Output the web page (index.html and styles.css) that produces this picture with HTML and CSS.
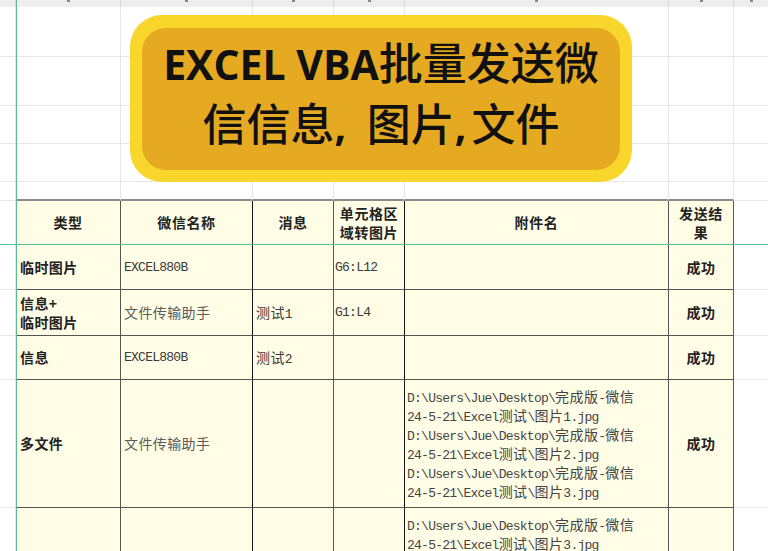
FILE: index.html
```html
<!DOCTYPE html>
<html lang="zh-CN">
<head>
<meta charset="utf-8">
<title>EXCEL VBA批量发送微信信息</title>
<link rel="stylesheet" href="styles.css">
</head>
<body>
<div class="sheet">
  <div class="grid">
    <!-- column header strip -->
    <div class="ch"></div>
    <div class="ch"><span class="tick"></span></div>
    <div class="ch"><span class="tick"></span></div>
    <div class="ch"><span class="tick"></span></div>
    <div class="ch"><span class="tick"></span></div>
    <div class="ch"><span class="tick"></span></div>
    <div class="ch"><span class="tick"></span></div>
    <div class="ch last"><span class="tick"></span></div>

    <!-- empty rows above the table -->
    <div class="g"></div><div class="g"></div><div class="g"></div><div class="g"></div><div class="g"></div><div class="g"></div><div class="g"></div><div class="g last"></div>
    <div class="g"></div><div class="g"></div><div class="g"></div><div class="g"></div><div class="g"></div><div class="g"></div><div class="g"></div><div class="g last"></div>
    <div class="g"></div><div class="g"></div><div class="g"></div><div class="g"></div><div class="g"></div><div class="g"></div><div class="g"></div><div class="g last"></div>
    <div class="g"></div><div class="g"></div><div class="g"></div><div class="g"></div><div class="g"></div><div class="g"></div><div class="g"></div><div class="g last"></div>
    <div class="g"></div><div class="g tb"></div><div class="g tb"></div><div class="g tb"></div><div class="g tb"></div><div class="g tb"></div><div class="g tb"></div><div class="g last"></div>

    <!-- header row -->
    <div class="g"></div>
    <div class="t h">类型</div>
    <div class="t h dark">微信名称</div>
    <div class="t h">消息</div>
    <div class="t h dark"><div>单元格区<br>域转图片</div></div>
    <div class="t h">附件名</div>
    <div class="t h"><div>发送结<br>果</div></div>
    <div class="g last"></div>

    <!-- row 1 -->
    <div class="g"></div>
    <div class="t b">临时图片</div>
    <div class="t dark"><span class="m">EXCEL880B</span></div>
    <div class="t"></div>
    <div class="t dark tight"><span class="m">G6:L12</span></div>
    <div class="t"></div>
    <div class="t b c">成功</div>
    <div class="g last"></div>

    <!-- row 2 -->
    <div class="g"></div>
    <div class="t b"><div>信息+<br>临时图片</div></div>
    <div class="t dark grey">文件传输助手</div>
    <div class="t"><div>测试<span class="m">1</span></div></div>
    <div class="t dark tight"><span class="m">G1:L4</span></div>
    <div class="t"></div>
    <div class="t b c">成功</div>
    <div class="g last"></div>

    <!-- row 3 -->
    <div class="g"></div>
    <div class="t b">信息</div>
    <div class="t dark"><span class="m">EXCEL880B</span></div>
    <div class="t"><div>测试<span class="m">2</span></div></div>
    <div class="t dark tight"></div>
    <div class="t"></div>
    <div class="t b c">成功</div>
    <div class="g last"></div>

    <!-- row 4 -->
    <div class="g"></div>
    <div class="t b">多文件</div>
    <div class="t dark grey">文件传输助手</div>
    <div class="t"></div>
    <div class="t dark tight"></div>
    <div class="t paths">
      <div>
        <div class="ln"><span class="m">D:\Users\Jue\Desktop\</span>完成版<span class="m">-</span>微信</div>
        <div class="ln"><span class="m">24-5-21\Excel</span>测试<span class="m">\</span>图片<span class="m">1.jpg</span></div>
        <div class="ln"><span class="m">D:\Users\Jue\Desktop\</span>完成版<span class="m">-</span>微信</div>
        <div class="ln"><span class="m">24-5-21\Excel</span>测试<span class="m">\</span>图片<span class="m">2.jpg</span></div>
        <div class="ln"><span class="m">D:\Users\Jue\Desktop\</span>完成版<span class="m">-</span>微信</div>
        <div class="ln"><span class="m">24-5-21\Excel</span>测试<span class="m">\</span>图片<span class="m">3.jpg</span></div>
      </div>
    </div>
    <div class="t b c">成功</div>
    <div class="g last"></div>

    <!-- row 5 (continues below the visible area) -->
    <div class="g"></div>
    <div class="t"></div>
    <div class="t dark"></div>
    <div class="t"></div>
    <div class="t dark tight"></div>
    <div class="t paths top">
      <div>
        <div class="ln"><span class="m">D:\Users\Jue\Desktop\</span>完成版<span class="m">-</span>微信</div>
        <div class="ln"><span class="m">24-5-21\Excel</span>测试<span class="m">\</span>图片<span class="m">3.jpg</span></div>
      </div>
    </div>
    <div class="t"></div>
    <div class="g last"></div>
  </div>

  <div class="banner">
    <div class="banner-inner">
      <div class="bline"><span class="lat">EXCEL VBA</span>批量发送微</div>
      <div class="bline">信信息<span class="lat cm">, </span>图片<span class="lat cm">,</span>文件</div>
    </div>
  </div>

  <div class="freeze-v"></div>
  <div class="freeze-h"></div>
</div>
</body>
</html>
```

FILE: styles.css
```css
html, body {
  margin: 0;
  padding: 0;
  background: #ffffff;
  overflow: hidden;
}

.sheet {
  position: relative;
  width: 768px;
  height: 551px;
  overflow: hidden;
  font-family: "Noto Sans CJK SC", sans-serif;
  font-size: 14px;
  line-height: 19px;
  color: #222;
}

.grid {
  display: grid;
  grid-template-columns: 16px 105px 132px 81px 71px 264px 65px 34px;
  grid-template-rows: 7px 50px 49px 38px 38px 19px 44px 45px 46px 44px 128px 128px;
}

.grid > div {
  box-sizing: border-box;
  min-width: 0;
}

/* column header strip */
.ch {
  background: #eeeeee;
  border-right: 1px solid #d8d8d8;
  display: flex;
  justify-content: center;
  align-items: flex-start;
}
.ch.last { border-right: none; }
.tick {
  width: 3px;
  height: 2px;
  background: #8a8a8a;
}

/* empty spreadsheet cells */
.g {
  border-right: 1px solid #e6e6e6;
  border-bottom: 1px solid #e6e6e6;
}
.g.last { border-right: none; }
.g.tb { border-bottom: 2px solid #8c8c8c; }

/* table cells */
.t {
  background: #fffde6;
  border-right: 1px solid #555;
  border-bottom: 1px solid #555;
  display: flex;
  align-items: center;
  padding: 0 3px;
  letter-spacing: 0.4px;
  color: #3a3a3a;
  white-space: nowrap;
  overflow: hidden;
}
.t.dark { border-right-color: #151515; }
.t.tight { padding: 0 1px; }
.t.h {
  justify-content: center;
  text-align: center;
  font-weight: bold;
  color: #222;
  letter-spacing: 0.6px;
}
.t.b {
  font-weight: bold;
  color: #222;
  padding-left: 4px;
}
.t.c {
  justify-content: center;
  padding-left: 3px;
}
.t.grey { color: #5a5a5a; }
.t.paths { padding: 0 2px; color: #444; }
.t.paths.top {
  align-items: flex-start;
  padding-top: 7px;
}
.ln {
  height: 19px;
  line-height: 19px;
  white-space: nowrap;
}

.m {
  font-family: "Liberation Mono", monospace;
  font-size: 13px;
  line-height: 1;
  letter-spacing: -0.75px;
}

/* banner */
.banner {
  position: absolute;
  left: 130px;
  top: 15px;
  width: 502px;
  height: 167px;
  box-sizing: border-box;
  padding: 13px 12px 12px 12px;
  background: #f8d62b;
  border-radius: 32px;
}
.banner-inner {
  height: 100%;
  box-sizing: border-box;
  background: #e6a922;
  border-radius: 24px;
  padding-top: 4px;
  display: flex;
  flex-direction: column;
  align-items: center;
  color: #111;
  font-size: 44px;
  line-height: 58px;
  font-weight: 500;
  white-space: nowrap;
}
.lat {
  font-family: "Open Sans", sans-serif;
  font-weight: bold;
  font-size: 41px;
}
.lat.cm { letter-spacing: 5px; }

/* frozen pane lines */
.freeze-v {
  position: absolute;
  left: 16px;
  top: 0;
  width: 1px;
  height: 551px;
  background: #56bf95;
}
.freeze-h {
  position: absolute;
  left: 0;
  top: 244px;
  width: 768px;
  height: 1px;
  background: #56bf95;
}
```
